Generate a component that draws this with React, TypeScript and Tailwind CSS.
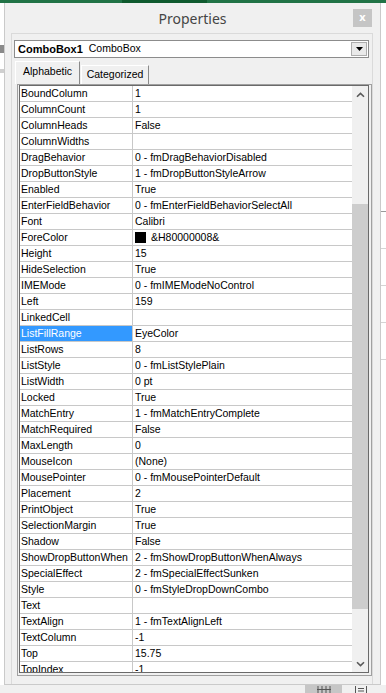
import React from "react";

type Prop = { name: string; value: string; swatch?: boolean; selected?: boolean };

const props: Prop[] = [
  { name: "BoundColumn", value: "1" },
  { name: "ColumnCount", value: "1" },
  { name: "ColumnHeads", value: "False" },
  { name: "ColumnWidths", value: "" },
  { name: "DragBehavior", value: "0 - fmDragBehaviorDisabled" },
  { name: "DropButtonStyle", value: "1 - fmDropButtonStyleArrow" },
  { name: "Enabled", value: "True" },
  { name: "EnterFieldBehavior", value: "0 - fmEnterFieldBehaviorSelectAll" },
  { name: "Font", value: "Calibri" },
  { name: "ForeColor", value: "&H80000008&", swatch: true },
  { name: "Height", value: "15" },
  { name: "HideSelection", value: "True" },
  { name: "IMEMode", value: "0 - fmIMEModeNoControl" },
  { name: "Left", value: "159" },
  { name: "LinkedCell", value: "" },
  { name: "ListFillRange", value: "EyeColor", selected: true },
  { name: "ListRows", value: "8" },
  { name: "ListStyle", value: "0 - fmListStylePlain" },
  { name: "ListWidth", value: "0 pt" },
  { name: "Locked", value: "True" },
  { name: "MatchEntry", value: "1 - fmMatchEntryComplete" },
  { name: "MatchRequired", value: "False" },
  { name: "MaxLength", value: "0" },
  { name: "MouseIcon", value: "(None)" },
  { name: "MousePointer", value: "0 - fmMousePointerDefault" },
  { name: "Placement", value: "2" },
  { name: "PrintObject", value: "True" },
  { name: "SelectionMargin", value: "True" },
  { name: "Shadow", value: "False" },
  { name: "ShowDropButtonWhen", value: "2 - fmShowDropButtonWhenAlways" },
  { name: "SpecialEffect", value: "2 - fmSpecialEffectSunken" },
  { name: "Style", value: "0 - fmStyleDropDownCombo" },
  { name: "Text", value: "" },
  { name: "TextAlign", value: "1 - fmTextAlignLeft" },
  { name: "TextColumn", value: "-1" },
  { name: "Top", value: "15.75" },
  { name: "TopIndex", value: "-1" },
];

function Chevron({ down }: { down?: boolean }) {
  return (
    <svg width="9" height="6" viewBox="0 0 9 6" className="block">
      <path
        d={down ? "M1 1.2 L4.5 4.6 L8 1.2" : "M1 4.8 L4.5 1.4 L8 4.8"}
        fill="none"
        stroke="#5a5a5a"
        strokeWidth="1.6"
      />
    </svg>
  );
}

function PropRow({ p }: { p: Prop }) {
  return (
    <div className="flex h-[16px] shrink-0 border-b border-[#c8c8c8] leading-[15px]">
      <div
        className={`w-[113px] shrink-0 border-r border-[#c8c8c8] pl-[1px] whitespace-nowrap overflow-hidden ${
          p.selected ? "bg-[#3399ff] text-white" : "text-black"
        }`}
      >
        {p.name}
      </div>
      <div className="flex flex-1 items-center pl-[2px] whitespace-nowrap overflow-hidden text-black">
        {p.swatch && <span className="mr-[5px] h-[11px] w-[11px] shrink-0 bg-black" />}
        {p.value}
      </div>
    </div>
  );
}

export default function App() {
  return (
    <div className="flex h-[693px] w-[386px] flex-col overflow-hidden bg-white font-['Liberation_Sans',Arial,sans-serif] text-[10.5px]">
      {/* Excel ribbon edge */}
      <div className="flex h-[3px] shrink-0">
        <div className="w-[122px] bg-[#217346]" />
        <div className="w-[85px] bg-[#0f5a2e]" />
        <div className="flex-1 bg-[#217346]" />
      </div>

      <div className="flex h-[682px] shrink-0">
        {/* sheet behind, left */}
        <div className="flex w-[4px] shrink-0 flex-col bg-white">
          <div className="mt-[42px] h-[8px] bg-[#8a8a8a]" />
          <div className="mt-[16px] h-[4px] bg-[#cfcfcf]" />
        </div>

        {/* Properties window */}
        <div className="flex w-[377px] shrink-0 flex-col border-x border-b border-[#cacaca] bg-[#f0f0f0]">
          <div className="grid h-[30px] shrink-0 grid-cols-[1fr_auto_1fr] items-center">
            <div />
            <div className="font-['Noto_Sans',sans-serif] text-[14px] text-[#454545]">Properties</div>
            <div className="mr-[8px] flex h-[18px] w-[19px] items-center justify-center justify-self-end bg-[#c5c5c5] pb-[2px] font-['Noto_Sans',sans-serif] text-[11px] font-bold text-white">
              x
            </div>
          </div>

          <div className="ml-[6px] flex w-[362px] flex-1 flex-col border-l border-r border-t border-[#dadada] pl-[2px] pt-[6px]">
            {/* object combo */}
            <div className="flex h-[18px] w-[355px] shrink-0 items-center border border-[#8c8c8c] bg-white pl-[3px]">
              <span className="text-[11px] font-bold text-black">ComboBox1</span>
              <span className="ml-[6px] text-black">ComboBox</span>
              <div className="ml-auto mr-[1px] flex h-[14px] w-[16px] items-center justify-center border border-[#adadad] bg-[#e9e9e9]">
                <svg width="7" height="4" viewBox="0 0 7 4" className="block">
                  <path d="M0 0 H7 L3.5 4 Z" fill="#000" />
                </svg>
              </div>
            </div>

            {/* tabs */}
            <div className="mt-[3px] flex h-[23px] shrink-0 items-end pl-[1px]">
              <div className="flex h-[23px] w-[65px] items-center justify-center border-l border-t border-r border-l-white border-t-white border-r-[#8a8a8a] pb-[2px] text-black">
                Alphabetic
              </div>
              <div className="ml-[1px] flex h-[19px] w-[68px] items-center justify-center border-l border-t border-r border-l-white border-t-white border-r-[#8a8a8a] text-black">
                Categorized
              </div>
            </div>

            {/* property grid */}
            <div className="ml-[3px] w-[355px] shrink-0 border border-[#a0a0a0] pb-[2px] pl-[1px] pr-[2px]">
              <div className="flex h-[588px] border border-[#6a6a6a] bg-white">
                <div className="flex flex-1 flex-col overflow-hidden">
                  {props.map((p) => (
                    <PropRow key={p.name} p={p} />
                  ))}
                </div>
                <div className="flex w-[16px] shrink-0 flex-col bg-[#f0f0f0]">
                  <div className="flex h-[17px] shrink-0 items-center justify-center">
                    <Chevron />
                  </div>
                  <div className="h-[101px] shrink-0" />
                  <div className="h-[405px] shrink-0 bg-[#cdcdcd]" />
                  <div className="flex-1" />
                  <div className="flex h-[17px] shrink-0 items-center justify-center">
                    <Chevron down />
                  </div>
                </div>
              </div>
            </div>
          </div>
        </div>

        {/* sheet behind, right */}
        <div className="flex flex-1 flex-col bg-white">
          <div className="h-[209px] border-b border-[#9a9a9a]" />
          <div className="h-[37px] border-b border-[#d4d4d4]" />
          <div className="h-[37px] border-b border-[#d4d4d4]" />
          <div className="h-[37px] border-b border-[#d4d4d4]" />
          <div className="h-[37px] border-b border-[#d4d4d4]" />
        </div>
      </div>

      {/* Excel status bar */}
      <div className="flex flex-1 bg-[#f0f0f0]">
        <div className="ml-[305px] flex w-[37px] justify-center bg-[#c6c6c6] pt-[1px]">
          <svg width="14" height="8" viewBox="0 0 14 8" className="block">
            <path d="M1 0 V8 M5 0 V8 M9 0 V8 M13 0 V8 M0 3.5 H14" stroke="#555" strokeWidth="1" fill="none" />
          </svg>
        </div>
        <div className="ml-[13px] pt-[1px]">
          <svg width="12" height="8" viewBox="0 0 12 8" className="block">
            <path d="M0.5 0 V7.5 H11.5 V0 M3 2.5 H9 M3 5 H9" stroke="#555" strokeWidth="1" fill="none" />
          </svg>
        </div>
      </div>
    </div>
  );
}
